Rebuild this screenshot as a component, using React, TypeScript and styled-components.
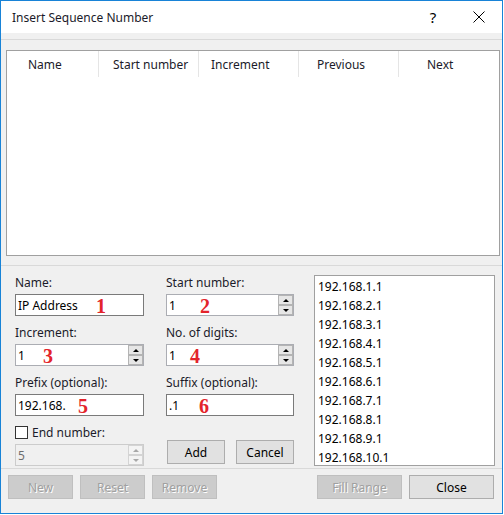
import styled, { createGlobalStyle } from "styled-components";

const GlobalStyle = createGlobalStyle`
  html, body {
    margin: 0;
    padding: 0;
    background: #ffffff;
  }
  body {
    font-family: "Noto Sans", "DejaVu Sans", sans-serif;
    font-size: 12px;
    color: #000000;
  }
  * {
    box-sizing: border-box;
  }
`;

const Window = styled.div`
  width: 503px;
  height: 514px;
  border: 1px solid #1883d7;
  background: #f0f0f0;
  display: flex;
  flex-direction: column;
`;

const TitleBar = styled.div`
  height: 32px;
  background: #ffffff;
  display: flex;
  align-items: center;
  padding-left: 11px;
`;

const Title = styled.div`
  flex: 1;
  font-size: 12px;
  color: #1b1b2a;
`;

const CaptionButton = styled.div`
  width: 46px;
  height: 32px;
  display: flex;
  align-items: center;
  justify-content: center;
  font-size: 15px;
`;

const Rule = styled.div<{ $top: number }>`
  height: 1px;
  margin-top: ${(p) => p.$top}px;
  background: #d9d9d9;
`;

const ListView = styled.div`
  margin: 10px 2px 0 5px;
  height: 206px;
  background: #ffffff;
  border: 1px solid #a0a0a0;
`;

const HeaderRow = styled.div`
  display: flex;
  height: 26px;
`;

const HeaderCell = styled.div<{ $w: number; $pad: number }>`
  width: ${(p) => p.$w}px;
  padding-left: ${(p) => p.$pad}px;
  border-right: 1px solid #e5e5e5;
  display: flex;
  align-items: center;
  color: #1b1b2a;
  &:last-child {
    border-right: none;
  }
`;

const Form = styled.div`
  display: flex;
  padding: 9px 0 0 14px;
  height: 200px;
`;

const Column = styled.div<{ $w: number; $gap: number }>`
  width: ${(p) => p.$w}px;
  margin-right: ${(p) => p.$gap}px;
  display: flex;
  flex-direction: column;
`;

const Group = styled.div`
  display: flex;
  flex-direction: column;
  & + & {
    margin-top: 9px;
  }
`;

const Label = styled.div`
  height: 16px;
  line-height: 16px;
  margin-bottom: 3px;
  color: #1b1b2a;
`;

const Field = styled.div<{ $spin?: boolean; $disabled?: boolean }>`
  position: relative;
  height: 22px;
  display: flex;
  align-items: center;
  border: 1px solid
    ${(p) => (p.$disabled ? "#cccccc" : p.$spin ? "#abadb3" : "#7a7a7a")};
  background: ${(p) => (p.$disabled ? "#f0f0f0" : "#ffffff")};
  color: ${(p) => (p.$disabled ? "#6d6d6d" : "#000000")};
`;

const Value = styled.div`
  flex: 1;
  padding-left: 2px;
  white-space: nowrap;
`;

// red annotation digits laid over the inputs
const Marker = styled.span<{ $left: number }>`
  position: absolute;
  top: 1px;
  left: ${(p) => p.$left}px;
  font-family: "Liberation Serif", "DejaVu Serif", serif;
  font-size: 20px;
  font-weight: bold;
  line-height: 1;
  color: #e3242b;
  pointer-events: none;
`;

const Spinner = styled.div`
  width: 15px;
  height: 20px;
  display: flex;
  flex-direction: column;
`;

const SpinButton = styled.div<{ $disabled?: boolean }>`
  flex: 1;
  display: flex;
  align-items: center;
  justify-content: center;
  background: ${(p) => (p.$disabled ? "#f4f4f4" : "#e6e6e6")};
  border: 1px solid ${(p) => (p.$disabled ? "#d4d4d4" : "#b4b4b4")};
`;

const Arrow = styled.div<{ $down?: boolean; $disabled?: boolean }>`
  width: 0;
  height: 0;
  border-left: 3px solid transparent;
  border-right: 3px solid transparent;
  ${(p) =>
    p.$down
      ? `border-top: 3px solid ${p.$disabled ? "#a8a8a8" : "#000000"};`
      : `border-bottom: 3px solid ${p.$disabled ? "#a8a8a8" : "#000000"};`}
`;

const CheckRow = styled.label`
  margin-top: 8px;
  height: 16px;
  display: flex;
  align-items: center;
  gap: 4px;
  color: #1b1b2a;
`;

const CheckBox = styled.span`
  width: 13px;
  height: 13px;
  border: 1px solid #333333;
  background: #ffffff;
`;

const EndField = styled.div`
  margin-top: 4px;
`;

const ButtonPair = styled.div`
  margin-top: 24px;
  padding-left: 1px;
  display: flex;
  gap: 11px;
`;

const Button = styled.div<{ $w: number; $disabled?: boolean }>`
  width: ${(p) => p.$w}px;
  height: 24px;
  display: flex;
  align-items: center;
  justify-content: center;
  background: ${(p) => (p.$disabled ? "#cccccc" : "#e1e1e1")};
  border: 1px solid ${(p) => (p.$disabled ? "#bfbfbf" : "#adadad")};
  color: ${(p) => (p.$disabled ? "#a0a0a0" : "#000000")};
  text-shadow: ${(p) => (p.$disabled ? "1px 1px 0 #ffffff" : "none")};
`;

const ResultList = styled.div`
  height: 191px;
  background: #ffffff;
  border: 1px solid #a0a0a0;
  padding: 1px 0 0 3px;
`;

const ResultItem = styled.div`
  height: 19px;
  line-height: 19px;
`;

const ButtonBar = styled.div`
  display: flex;
  gap: 7px;
  margin-top: 6px;
  padding: 0 8px 0 7px;
`;

const Spacer = styled.div`
  flex: 1;
`;

const columns = [
  { name: "Name", w: 92, pad: 21 },
  { name: "Start number", w: 100, pad: 14 },
  { name: "Increment", w: 100, pad: 12 },
  { name: "Previous", w: 100, pad: 18 },
  { name: "Next", w: 100, pad: 28 },
];

const results = Array.from({ length: 10 }, (_, i) => `192.168.${i + 1}.1`);

function Spin({ disabled }: { disabled?: boolean }) {
  return (
    <Spinner>
      <SpinButton $disabled={disabled}>
        <Arrow $disabled={disabled} />
      </SpinButton>
      <SpinButton $disabled={disabled}>
        <Arrow $down $disabled={disabled} />
      </SpinButton>
    </Spinner>
  );
}

function App() {
  return (
    <>
      <GlobalStyle />
      <Window>
        <TitleBar>
          <Title>Insert Sequence Number</Title>
          <CaptionButton>?</CaptionButton>
          <CaptionButton>
            <svg width="12" height="12" viewBox="0 0 12 12">
              <path d="M0.5 0.5 L11.5 11.5 M11.5 0.5 L0.5 11.5" stroke="#000" strokeWidth="1" />
            </svg>
          </CaptionButton>
        </TitleBar>
        <Rule $top={6} />
        <ListView>
          <HeaderRow>
            {columns.map((c) => (
              <HeaderCell key={c.name} $w={c.w} $pad={c.pad}>
                {c.name}
              </HeaderCell>
            ))}
          </HeaderRow>
        </ListView>
        <Rule $top={9} />
        <Form>
          <Column $w={129} $gap={22}>
            <Group>
              <Label>Name:</Label>
              <Field>
                <Value>IP Address</Value>
                <Marker $left={80}>1</Marker>
              </Field>
            </Group>
            <Group>
              <Label>Increment:</Label>
              <Field $spin>
                <Value>1</Value>
                <Marker $left={27}>3</Marker>
                <Spin />
              </Field>
            </Group>
            <Group>
              <Label>Prefix (optional):</Label>
              <Field>
                <Value>192.168.</Value>
                <Marker $left={62}>5</Marker>
              </Field>
            </Group>
            <CheckRow>
              <CheckBox />
              End number:
            </CheckRow>
            <EndField>
              <Field $spin $disabled>
                <Value>5</Value>
                <Spin disabled />
              </Field>
            </EndField>
          </Column>
          <Column $w={128} $gap={20}>
            <Group>
              <Label>Start number:</Label>
              <Field $spin>
                <Value>1</Value>
                <Marker $left={33}>2</Marker>
                <Spin />
              </Field>
            </Group>
            <Group>
              <Label>No. of digits:</Label>
              <Field $spin>
                <Value>1</Value>
                <Marker $left={23}>4</Marker>
                <Spin />
              </Field>
            </Group>
            <Group>
              <Label>Suffix (optional):</Label>
              <Field>
                <Value>.1</Value>
                <Marker $left={32}>6</Marker>
              </Field>
            </Group>
            <ButtonPair>
              <Button $w={58}>Add</Button>
              <Button $w={58}>Cancel</Button>
            </ButtonPair>
          </Column>
          <Column $w={181} $gap={0}>
            <ResultList>
              {results.map((r) => (
                <ResultItem key={r}>{r}</ResultItem>
              ))}
            </ResultList>
          </Column>
        </Form>
        <Rule $top={2} />
        <ButtonBar>
          <Button $w={65} $disabled>New</Button>
          <Button $w={65} $disabled>Reset</Button>
          <Button $w={65} $disabled>Remove</Button>
          <Spacer />
          <Button $w={85} $disabled>Fill Range</Button>
          <Button $w={85}>Close</Button>
        </ButtonBar>
      </Window>
    </>
  );
}

export default App;
